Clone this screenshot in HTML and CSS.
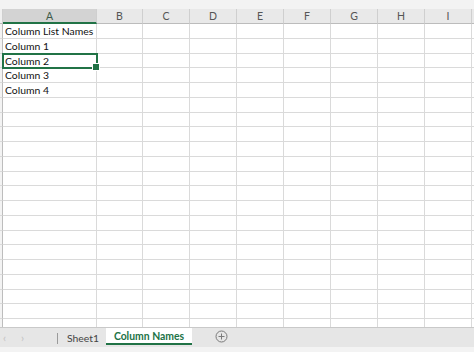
FILE: index.html
```html
<!DOCTYPE html>
<html>
<head>
<meta charset="utf-8">
<link rel="stylesheet" href="styles.css">
</head>
<body>
<div class="app">
  <div class="topband"></div>
  <div class="grid">
    <div class="hcell corner"></div>
    <div class="hcell active">A</div>
    <div class="hcell">B</div>
    <div class="hcell">C</div>
    <div class="hcell">D</div>
    <div class="hcell">E</div>
    <div class="hcell">F</div>
    <div class="hcell">G</div>
    <div class="hcell">H</div>
    <div class="hcell">I</div>
    <div class="hcell rest"></div>
  </div>
  <div class="grid body" id="body"></div>
  <div class="tabbar">
    <div class="nav"><span class="arrow">‹</span><span class="arrow">›</span></div>
    <div class="sep"></div>
    <div class="tab">Sheet1</div>
    <div class="tab current">Column Names</div>
    <div class="add">
      <svg width="13" height="13" viewBox="0 0 13 13"><circle cx="6.5" cy="6.5" r="5.5" fill="none" stroke="#7a7a7a" stroke-width="1"/><path d="M6.5 3.5v6M3.5 6.5h6" stroke="#7a7a7a" stroke-width="1"/></svg>
    </div>
  </div>
  <div class="bottomband"></div>
</div>
<script>
  var data = ["Column List Names", "Column 1", "Column 2", "Column 3", "Column 4"];
  var body = document.getElementById("body");
  var html = "";
  for (var r = 0; r < 21; r++) {
    html += '<div class="cell rowhead"></div>';
    for (var c = 0; c < 9; c++) {
      var txt = (c === 0 && r < data.length) ? data[r] : "";
      var cls = "cell" + ((c === 0 && r === 2) ? " selected" : "");
      html += '<div class="' + cls + '">' + txt + '</div>';
    }
    html += '<div class="cell rest"></div>';
  }
  body.innerHTML = html;
</script>
</body>
</html>
```

FILE: styles.css
```css
* { box-sizing: border-box; }
html, body { margin: 0; padding: 0; }
body {
  width: 474px;
  height: 352px;
  overflow: hidden;
  background: #fff;
  font-family: Lato, "Open Sans", "Liberation Sans", sans-serif;
}
.app {
  display: flex;
  flex-direction: column;
  height: 352px;
}
.topband {
  height: 9px;
  background: #f3f3f3;
  flex: none;
}
.grid {
  display: grid;
  grid-template-columns: 3px 94px 46px repeat(7, 47px) 2px;
  flex: none;
}
.hcell {
  height: 15px;
  background: #e9e9e9;
  border-right: 1px solid #cfcfcf;
  border-bottom: 1px solid #bcbcbc;
  font-size: 10.5px;
  line-height: 14px;
  color: #555;
  text-align: center;
}
.hcell.corner { background: #f0f0f0; }
.hcell.active {
  background: #d3d3d3;
  border-bottom: 2px solid #217346;
  color: #3d5a48;
}
.hcell.rest { border-right: none; }
.grid.body {
  flex: 1 1 auto;
  height: 303px;
  min-height: 0;
  overflow: hidden;
  grid-auto-rows: 14.75px;
  align-content: start;
}
.cell {
  border-right: 1px solid #dadada;
  border-bottom: 1px solid #dadada;
  font-size: 10.4px;
  line-height: 14px;
  padding-left: 2px;
  color: #111;
  white-space: nowrap;
  overflow: visible;
}
.cell.rowhead { background: #f3f3f3; border-right: 1px solid #bdbdbd; padding: 0; }
.cell.rest { border-right: none; padding: 0; }
.cell.selected {
  position: relative;
  outline: 2px solid #217346;
  outline-offset: -1px;
  z-index: 1;
}
.cell.selected::after {
  content: "";
  position: absolute;
  right: -4px;
  bottom: -4px;
  width: 6px;
  height: 6px;
  background: #217346;
  border: 1px solid #fff;
}
.tabbar {
  height: 20px;
  flex: none;
  background: #e6e6e6;
  border-top: 1px solid #c9c9c9;
  display: flex;
  align-items: stretch;
  font-size: 10.4px;
}
.nav {
  width: 57px;
  display: flex;
  align-items: center;
  padding-left: 3px;
  gap: 15px;
}
.arrow {
  color: #c2c2c2;
  font-size: 11px;
  line-height: 1;
}
.sep {
  width: 1px;
  background: #9a9a9a;
  margin: 5px 0 3px;
}
.tab {
  padding: 0 9px 0 9px;
  width: 48px;
  display: flex;
  align-items: center;
  color: #444;
}
.tab.current {
  width: 86px;
  justify-content: center;
  background: #fff;
  color: #217346;
  font-weight: bold;
  border-bottom: 2px solid #217346;
  margin-bottom: 2px;
  padding: 0;
}
.add {
  margin-left: 23px;
  display: flex;
  align-items: center;
  padding-bottom: 2px;
}
.bottomband {
  flex: none;
  height: 5px;
  background: #f3f3f3;
}
```
